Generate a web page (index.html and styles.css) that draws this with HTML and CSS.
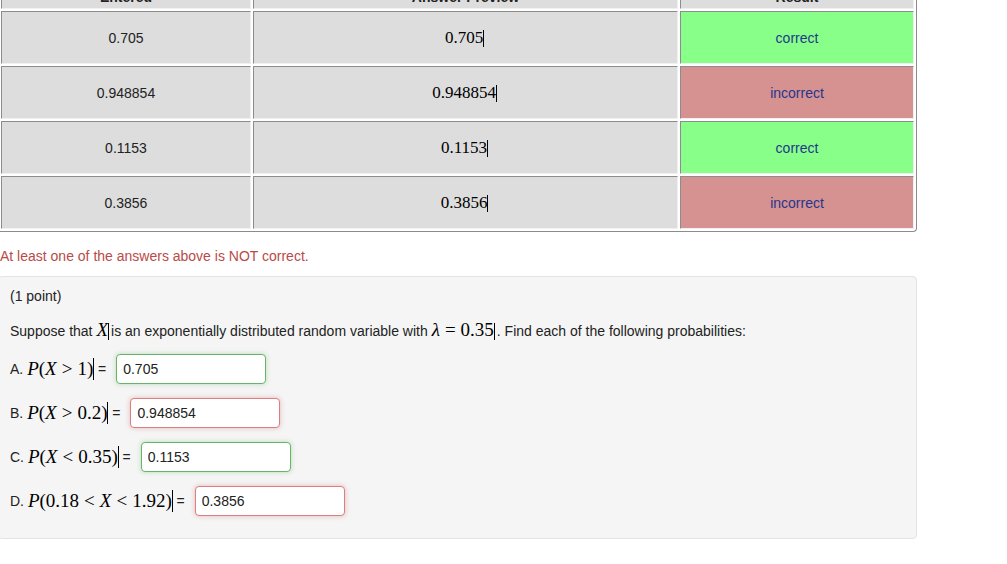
FILE: index.html
```html
<!DOCTYPE html>
<html>
<head>
<meta charset="utf-8">
<link rel="stylesheet" href="styles.css">
</head>
<body>
<div class="page">
  <table class="attempts">
    <tr class="head">
      <th class="c1">Entered</th>
      <th class="c2">Answer Preview</th>
      <th class="c3">Result</th>
    </tr>
    <tr>
      <td>0.705</td>
      <td class="preview"><span class="mj">0.705</span><span class="bar"></span></td>
      <td class="ok">correct</td>
    </tr>
    <tr>
      <td>0.948854</td>
      <td class="preview"><span class="mj">0.948854</span><span class="bar"></span></td>
      <td class="bad">incorrect</td>
    </tr>
    <tr>
      <td>0.1153</td>
      <td class="preview"><span class="mj">0.1153</span><span class="bar"></span></td>
      <td class="ok">correct</td>
    </tr>
    <tr>
      <td>0.3856</td>
      <td class="preview"><span class="mj">0.3856</span><span class="bar"></span></td>
      <td class="bad">incorrect</td>
    </tr>
  </table>

  <div class="alert">At least one of the answers above is NOT correct.</div>

  <div class="well">
    <div class="line">(1 point)</div>
    <div class="line">Suppose that <span class="mj big"><i>X</i></span><span class="bar"></span>is an exponentially distributed random variable with <span class="mj big"><i>λ</i><span class="op">=</span>0.35</span><span class="bar"></span>. Find each of the following probabilities:</div>
    <div class="row">A. <span class="mj big"><i>P</i>(<i>X</i><span class="op">&gt;</span>1)</span><span class="bar tall"></span> = <input class="ans good" value="0.705"></div>
    <div class="row">B. <span class="mj big"><i>P</i>(<i>X</i><span class="op">&gt;</span>0.2)</span><span class="bar tall"></span> = <input class="ans wrong" value="0.948854"></div>
    <div class="row">C. <span class="mj big"><i>P</i>(<i>X</i><span class="op">&lt;</span>0.35)</span><span class="bar tall"></span> = <input class="ans good" value="0.1153"></div>
    <div class="row">D. <span class="mj big"><i>P</i>(0.18<span class="op">&lt;</span><i>X</i><span class="op">&lt;</span>1.92)</span><span class="bar tall"></span> = <input class="ans wrong" value="0.3856"></div>
  </div>
</div>
</body>
</html>
```
FILE: styles.css
```css
html, body {
  margin: 0;
  padding: 0;
  background: #fff;
}
body {
  font-family: "Liberation Sans", Arial, sans-serif;
  font-size: 14px;
  line-height: 20px;
  color: #222;
}
.page {
  width: 919px;
  margin-left: -2px;
}
.attempts {
  width: 919px;
  margin-top: -18px;
  border-collapse: separate;
  border-spacing: 2px;
  border: 1px solid;
  border-color: #eeeeee #8c8c8c #8c8c8c #eeeeee;
  border-radius: 0 0 4px 0;
}
.attempts th,
.attempts td {
  border: 1px solid;
  border-color: #8c8c8c #f0f0f0 #f0f0f0 #8c8c8c;
  background: #dddddd;
  text-align: center;
  vertical-align: middle;
  padding: 0;
}
.attempts th {
  height: 22px;
  font-weight: bold;
}
.attempts td {
  height: 51px;
}
.attempts .c1 { width: 248px; }
.attempts .c2 { width: 423px; }
.attempts .c3 { width: 232px; }
.attempts td.ok {
  background: #88ff88;
  color: #24378c;
}
.attempts td.bad {
  background: #d69191;
  color: #24378c;
}
.mj {
  font-family: "Liberation Serif", "Times New Roman", serif;
  font-size: 17px;
  color: #000;
}
.mj.big {
  font-size: 19px;
}
.mj i {
  font-style: italic;
}
.op {
  padding: 0 5px;
}
.bar {
  display: inline-block;
  width: 1px;
  height: 17px;
  background: #000;
  vertical-align: -4px;
  margin-right: 2px;
}
.bar.tall {
  height: 22px;
  vertical-align: middle;
  margin-right: 0;
}
.alert {
  margin-top: 14px;
  padding-left: 2px;
  color: #b94a48;
}
.well {
  margin-top: 10px;
  box-sizing: border-box;
  width: 919px;
  background: #f5f5f5;
  border: 1px solid #e3e3e3;
  border-radius: 4px;
  padding: 9px 11px 22px 11px;
  display: flex;
  flex-direction: column;
  gap: 14px;
}
.line {
  height: 20px;
}
.row {
  height: 30px;
  display: flex;
  align-items: center;
  white-space: pre;
}
.ans {
  box-sizing: border-box;
  width: 150px;
  height: 30px;
  margin-left: 6px;
  padding: 4px 6px;
  font-family: "Liberation Sans", Arial, sans-serif;
  font-size: 14px;
  color: #222;
  background: #fff;
  border: 1px solid #ccc;
  border-radius: 4px;
  outline: none;
}
.ans.good {
  border-color: #6ab46a;
  box-shadow: 0 0 5px rgba(90, 180, 90, 0.4);
}
.ans.wrong {
  border-color: #d98080;
  box-shadow: 0 0 5px rgba(210, 90, 90, 0.4);
}
```
